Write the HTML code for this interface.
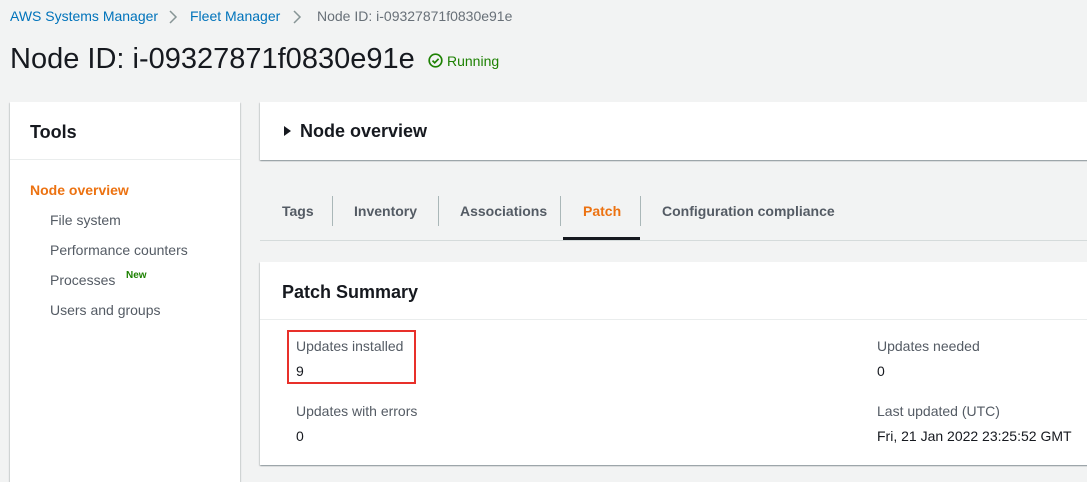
<!DOCTYPE html>
<html><head><meta charset="utf-8"><style>
*{margin:0;padding:0;box-sizing:border-box}
body{width:1087px;height:475px;overflow:hidden;background:#f2f3f3;font-family:"Liberation Sans",sans-serif;color:#16191f;position:relative}
.a{position:absolute;white-space:nowrap}
.bc{top:8px;font-size:14px}
.link{color:#0073bb}
.panel{position:absolute;background:#fff;box-shadow:0 1px 1px 0 rgba(0,28,36,.25),1px 1px 1px 0 rgba(0,28,36,.12),-1px 1px 1px 0 rgba(0,28,36,.12)}
.nav{font-size:14px;color:#545b64}
.tab{top:203px;font-size:14px;font-weight:bold;color:#545b64}
.sep{position:absolute;top:196px;width:1px;height:30px;background:#aab7b8}
.lbl{font-size:14px;color:#545b64}
.val{font-size:14px;color:#16191f}
</style></head><body>
<div class="a bc link" style="left:10px">AWS Systems Manager</div>
<svg class="a" style="left:168px;top:10px" width="10" height="14"><path d="M2 1l6 6-6 6" fill="none" stroke="#879596" stroke-width="1.5"/></svg>
<div class="a bc link" style="left:190px">Fleet Manager</div>
<svg class="a" style="left:292px;top:10px" width="10" height="14"><path d="M2 1l6 6-6 6" fill="none" stroke="#879596" stroke-width="1.5"/></svg>
<div class="a bc" style="left:317px;color:#687078">Node ID: i-09327871f0830e91e</div>
<div class="a" style="left:10px;top:43px;font-size:29px;color:#16191f">Node ID: i-09327871f0830e91e</div>
<svg class="a" style="left:428px;top:53px" width="15" height="15"><circle cx="7.5" cy="7.5" r="6.3" fill="none" stroke="#1d8102" stroke-width="1.7"/><path d="M4.5 7.6l2.2 2.2 3.9-4" fill="none" stroke="#1d8102" stroke-width="1.7"/></svg>
<div class="a" style="left:447px;top:53px;font-size:14px;color:#1d8102">Running</div>

<div class="panel" style="left:10px;top:102px;width:230px;height:380px">
 <div style="height:58px;border-bottom:1px solid #eaeded;padding:20px 0 0 20px;font-size:18px;font-weight:bold">Tools</div>
</div>
<div class="a" style="left:30px;top:182px;font-size:14px;font-weight:bold;color:#ec7211">Node overview</div>
<div class="a nav" style="left:50px;top:212px">File system</div>
<div class="a nav" style="left:50px;top:242px">Performance counters</div>
<div class="a nav" style="left:50px;top:272px">Processes</div>
<div class="a" style="left:126px;top:270px;font-size:10px;font-weight:bold;color:#1d8102">New</div>
<div class="a nav" style="left:50px;top:302px">Users and groups</div>

<div class="panel" style="left:260px;top:102px;width:840px;height:58px"></div>
<svg class="a" style="left:283px;top:125px" width="9" height="12"><path d="M1 1l7 5-7 5z" fill="#16191f"/></svg>
<div class="a" style="left:300px;top:121px;font-size:18px;font-weight:bold">Node overview</div>

<div class="a tab" style="left:282px">Tags</div>
<div class="sep" style="left:332px"></div>
<div class="a tab" style="left:354px">Inventory</div>
<div class="sep" style="left:438px"></div>
<div class="a tab" style="left:460px">Associations</div>
<div class="sep" style="left:560px"></div>
<div class="a tab" style="left:583px;color:#ec7211">Patch</div>
<div class="sep" style="left:640px"></div>
<div class="a tab" style="left:662px">Configuration compliance</div>
<div class="a" style="left:260px;top:240px;width:827px;height:1px;background:#d5dbdb"></div>
<div class="a" style="left:563px;top:237px;width:77px;height:3px;background:#16191f"></div>

<div class="panel" style="left:260px;top:262px;width:840px;height:203px">
 <div style="height:58px;border-bottom:1px solid #eaeded;padding:20px 0 0 22px;font-size:18px;font-weight:bold">Patch Summary</div>
</div>
<div class="a" style="left:287px;top:330px;width:129px;height:54px;border:2px solid #e8302a"></div>
<div class="a lbl" style="left:296px;top:338px">Updates installed</div>
<div class="a val" style="left:296px;top:363px">9</div>
<div class="a lbl" style="left:296px;top:403px">Updates with errors</div>
<div class="a val" style="left:296px;top:428px">0</div>
<div class="a lbl" style="left:877px;top:338px">Updates needed</div>
<div class="a val" style="left:877px;top:363px">0</div>
<div class="a lbl" style="left:877px;top:403px">Last updated (UTC)</div>
<div class="a val" style="left:877px;top:428px">Fri, 21 Jan 2022 23:25:52 GMT</div>
</body></html>
